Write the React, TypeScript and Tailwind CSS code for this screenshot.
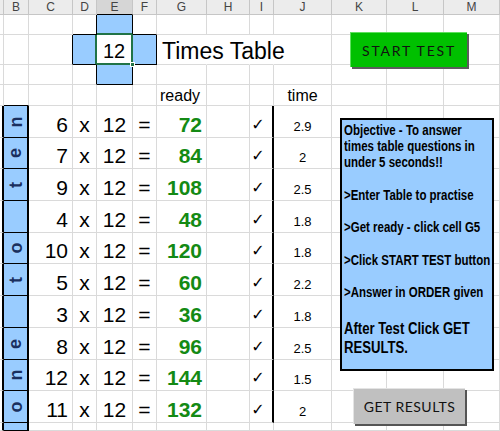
import type { ReactNode } from "react";

// right / bottom border per cell (each cell owns its right and bottom edge)
const RIGHT: Record<string, string> = {
  g: "border-r border-r-[#dadada]",
  h: "border-r border-r-[#c6c6c6]",
  k: "border-r border-r-black",
  k2: "border-r-2 border-r-black",
  G: "border-r-2 border-r-[#217346]",
  n: "border-r border-r-transparent",
};
const BOTTOM: Record<string, string> = {
  g: "border-b border-b-[#dadada]",
  h: "border-b border-b-[#c6c6c6]",
  k: "border-b border-b-black",
  G: "border-b-2 border-b-[#217346]",
};

const HEADERS = ["", "B", "C", "D", "E", "F", "G", "H", "I", "J", "K", "L", "M"];
const LETTERS = ["n", "e", "t", "", "o", "t", "", "e", "n", "o"];
const ROWS: [number, string][] = [
  [6, "2.9"],
  [7, "2"],
  [9, "2.5"],
  [4, "1.8"],
  [10, "1.8"],
  [5, "2.2"],
  [3, "1.8"],
  [8, "2.5"],
  [12, "1.5"],
  [11, "2"],
];
const TABLE = 12;
const GRID = Array.from({ length: 16 * 13 }, (_, i) => [Math.floor(i / 13), i % 13]);

type Spec = { right: string; bottom: string; cls: string; content: ReactNode };

function spec(r: number, c: number): Spec {
  const s: Spec = { right: "g", bottom: "g", cls: "", content: null };

  if (r === 0) {
    s.right = "h";
    s.bottom = c === 4 ? "k" : "h";
    s.cls =
      (c === 4 ? "bg-[#d6d6d6] " : "bg-[#ececec] ") +
      "flex items-center justify-center text-[12px] text-[#444]";
    s.content = HEADERS[c];
    return s;
  }

  // the cross round the table number
  if (r === 1 && c === 3) { s.right = "k"; s.bottom = "k"; }
  if (r === 1 && c === 4) { s.right = "k"; s.bottom = "G"; s.cls = "bg-[#99ccff]"; }
  if (r === 1 && c === 5) { s.bottom = "k"; }
  if (r === 2 && c === 2) { s.right = "k"; }
  if (r === 2 && c === 3) { s.right = "G"; s.bottom = "k"; s.cls = "bg-[#99ccff]"; }
  if (r === 2 && c === 4) {
    s.right = "G";
    s.bottom = "G";
    s.cls = "relative flex items-end justify-center text-[20px] leading-[24px]";
    s.content = (
      <>
        {TABLE}
        <span className="absolute -right-[4px] -bottom-[4px] w-[5px] h-[5px] bg-[#217346] border border-white" />
      </>
    );
  }
  if (r === 2 && c === 5) { s.right = "k"; s.bottom = "k"; s.cls = "bg-[#99ccff]"; }
  if (r === 3 && c === 3) { s.right = "k"; }
  if (r === 3 && c === 4) { s.right = "k"; s.bottom = "k"; s.cls = "bg-[#99ccff]"; }

  // title spills over G..J
  if (r === 2 && c >= 6 && c <= 8) s.right = "n";
  if (r === 2 && c === 6) {
    s.cls = "relative z-10 flex items-end pl-[5px] whitespace-nowrap text-[23px] leading-[26px]";
    s.content = "Times Table";
  }

  if (r === 4) {
    if (c === 1) s.bottom = "k";
    if (c === 6) {
      s.cls = "flex items-end pl-[3px] text-[16px] leading-[18px]";
      s.content = "ready";
    }
    if (c === 9) {
      s.cls = "flex items-end justify-center text-[16px] leading-[18px]";
      s.content = "time";
    }
  }

  if (r >= 5) {
    if (c === 0) s.right = "k2";
    if (c === 1) {
      s.right = "k2";
      s.bottom = "k";
      s.cls = "bg-[#99ccff] flex items-center justify-center";
      const l = LETTERS[r - 5];
      if (l) {
        s.content = (
          <span className="-rotate-90 font-bold text-[18px] leading-none text-[#1a2f5e]">{l}</span>
        );
      }
    }
  }

  if (r >= 5 && r <= 14) {
    const [n, t] = ROWS[r - 5];
    const big = "flex items-end text-[21px] leading-[24px]";
    if (c === 2) { s.cls = `${big} justify-end pr-[4px]`; s.content = n; }
    if (c === 3) { s.cls = `${big} justify-center`; s.content = "x"; }
    if (c === 4) { s.cls = `${big} justify-center`; s.content = TABLE; }
    if (c === 5) { s.cls = `${big} justify-center`; s.content = "="; }
    if (c === 6) {
      s.cls = `${big} justify-end pr-[4px] font-bold text-[#148a14]`;
      s.content = n * TABLE;
    }
    if (c === 8) {
      s.right = "k2";
      s.cls = "flex items-end justify-center pr-[6px] pb-[3px] text-[16px] leading-[18px] font-['DejaVu_Sans',sans-serif]";
      s.content = "✓";
    }
    if (c === 9) {
      s.cls = "flex items-end justify-center pb-[2px] text-[13px] leading-[16px]";
      s.content = t;
    }
  }

  return s;
}

export default function App() {
  return (
    <div className="relative w-[500px] h-[431px] overflow-hidden bg-white text-black font-['Liberation_Sans',Arial,sans-serif]">
      <div className="grid grid-cols-[4px_25px_44px_24px_36px_24px_50px_43px_24px_58px_55px_57px_56px] grid-rows-[15px_20px_30px_20px_21px_32px_31px_32px_32px_31px_32px_32px_32px_31px_32px_8px]">
        {GRID.map(([r, c]) => {
          const s = spec(r, c);
          return (
            <div key={`${r}-${c}`} className={`${RIGHT[s.right]} ${BOTTOM[s.bottom]} ${s.cls}`}>
              {s.content}
            </div>
          );
        })}
      </div>

      {/* START TEST button */}
      <button className="absolute left-[350px] top-[32px] w-[117px] h-[35px] bg-[#00c000] border-t border-l border-t-[#5fe05f] border-l-[#5fe05f] shadow-[2px_2px_0_#5c5c5c] flex items-center justify-center text-[14px] tracking-[1.8px] text-[#111] font-['Comic_Sans_MS','Lato',sans-serif]">
        START TEST
      </button>

      {/* instructions text box */}
      <div className="absolute left-[340px] top-[118px] w-[154px] h-[253px] border-2 border-black bg-[#99ccff] pl-[2px] pt-[2px] overflow-hidden">
        <div className="w-[180px] origin-top-left scale-x-[0.82] font-bold text-[14px] leading-[16.2px] whitespace-nowrap flex flex-col">
          <p>Objective - To answer</p>
          <p>times table questions in</p>
          <p>under 5 seconds!!</p>
          <p className="mt-[16.2px]">&gt;Enter Table to practise</p>
          <p className="mt-[16.2px]">&gt;Get ready - click cell G5</p>
          <p className="mt-[16.2px]">&gt;Click START TEST button</p>
          <p className="mt-[16.2px]">&gt;Answer in ORDER given</p>
          <p className="mt-[20px] text-[16px] leading-[18.5px]">After Test Click GET</p>
          <p className="text-[16px] leading-[18.5px]">RESULTS.</p>
        </div>
      </div>

      {/* GET RESULTS button */}
      <button className="absolute left-[353px] top-[388px] w-[112px] h-[36px] bg-[#c0c0c0] border-t border-l border-t-[#e4e4e4] border-l-[#e4e4e4] shadow-[2px_2px_0_#555] flex items-center justify-center text-[14px] tracking-[0.5px] text-[#111] font-['Comic_Sans_MS','Lato',sans-serif]">
        GET RESULTS
      </button>
    </div>
  );
}
